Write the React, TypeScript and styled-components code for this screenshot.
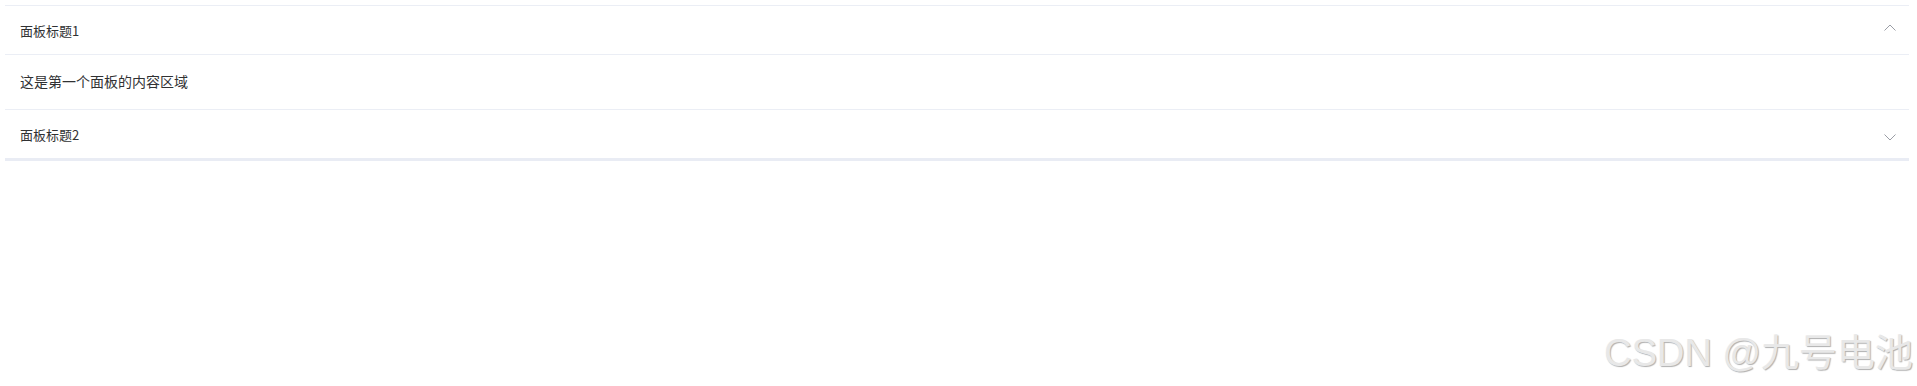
import React, { useState } from "react";
import styled, { createGlobalStyle } from "styled-components";

const GlobalStyle = createGlobalStyle`
  html, body {
    margin: 0;
    padding: 0;
    background: #ffffff;
  }
  body {
    font-family: "Noto Sans CJK SC", "Noto Sans", "Liberation Sans", sans-serif;
    color: #303133;
  }
`;

const Page = styled.div`
  position: relative;
  width: 1917px;
  height: 386px;
  overflow: hidden;
  padding: 5px 8px 0 5px;
  box-sizing: border-box;
`;

const Collapse = styled.div`
  border-top: 1px solid #ebeef5;
  border-bottom: 3px solid #e9ecf4;
`;

const Item = styled.div`
  display: flex;
  flex-direction: column;
`;

const Header = styled.button<{ $open: boolean; $last?: boolean }>`
  display: flex;
  align-items: center;
  justify-content: space-between;
  height: 48px;
  box-sizing: content-box;
  padding: 0 13px 0 15px;
  margin: 0;
  background: #ffffff;
  border: none;
  border-bottom: ${(p) => (p.$last && !p.$open ? "none" : "1px solid #ebeef5")};
  font-family: "Noto Sans CJK SC", "Noto Sans", "Liberation Sans", sans-serif;
  font-size: 13px;
  color: #303133;
  cursor: pointer;
  text-align: left;
  outline: none;
`;

const Title = styled.span`
  line-height: 48px;
  padding-top: 1px;
`;

const Arrow = styled.svg<{ $open: boolean }>`
  width: 12px;
  height: 7px;
  flex: none;
  margin-top: ${(p) => (p.$open ? "-5px" : "6px")};
`;

const Content = styled.div<{ $last?: boolean }>`
  padding: 15px 15px 16px;
  font-size: 14px;
  line-height: 23px;
  color: #303133;
  border-bottom: ${(p) => (p.$last ? "none" : "1px solid #ebeef5")};
`;

const Watermark = styled.div`
  position: absolute;
  right: 4px;
  bottom: 11px;
  font-family: "Liberation Sans", "Noto Sans CJK SC", sans-serif;
  font-size: 38px;
  line-height: 44px;
  color: #e8e8e8;
  text-shadow: 1px 1px 1px #b0b0b0, -0.5px -0.5px 0 #f6f6f6;
  white-space: nowrap;
  pointer-events: none;
`;

type Panel = { title: string; body: string };

const panels: Panel[] = [
  { title: "面板标题1", body: "这是第一个面板的内容区域" },
  { title: "面板标题2", body: "这是第二个面板的内容区域" },
];

function Chevron({ open }: { open: boolean }) {
  return (
    <Arrow $open={open} viewBox="0 0 12 7" fill="none">
      {open ? (
        <polyline points="0.5,6.5 6,1 11.5,6.5" stroke="#9a9da5" strokeWidth="1" />
      ) : (
        <polyline points="0.5,0.5 6,6 11.5,0.5" stroke="#9a9da5" strokeWidth="1" />
      )}
    </Arrow>
  );
}

export default function App() {
  const [open, setOpen] = useState<number[]>([0]);
  const toggle = (i: number) =>
    setOpen((o) => (o.includes(i) ? o.filter((x) => x !== i) : [...o, i]));

  return (
    <>
      <GlobalStyle />
      <Page>
        <Collapse>
          {panels.map((p, i) => {
            const isOpen = open.includes(i);
            const last = i === panels.length - 1;
            return (
              <Item key={p.title}>
                <Header $open={isOpen} $last={last} onClick={() => toggle(i)}>
                  <Title>{p.title}</Title>
                  <Chevron open={isOpen} />
                </Header>
                {isOpen && <Content $last={last}>{p.body}</Content>}
              </Item>
            );
          })}
        </Collapse>
        <Watermark>CSDN @九号电池</Watermark>
      </Page>
    </>
  );
}
